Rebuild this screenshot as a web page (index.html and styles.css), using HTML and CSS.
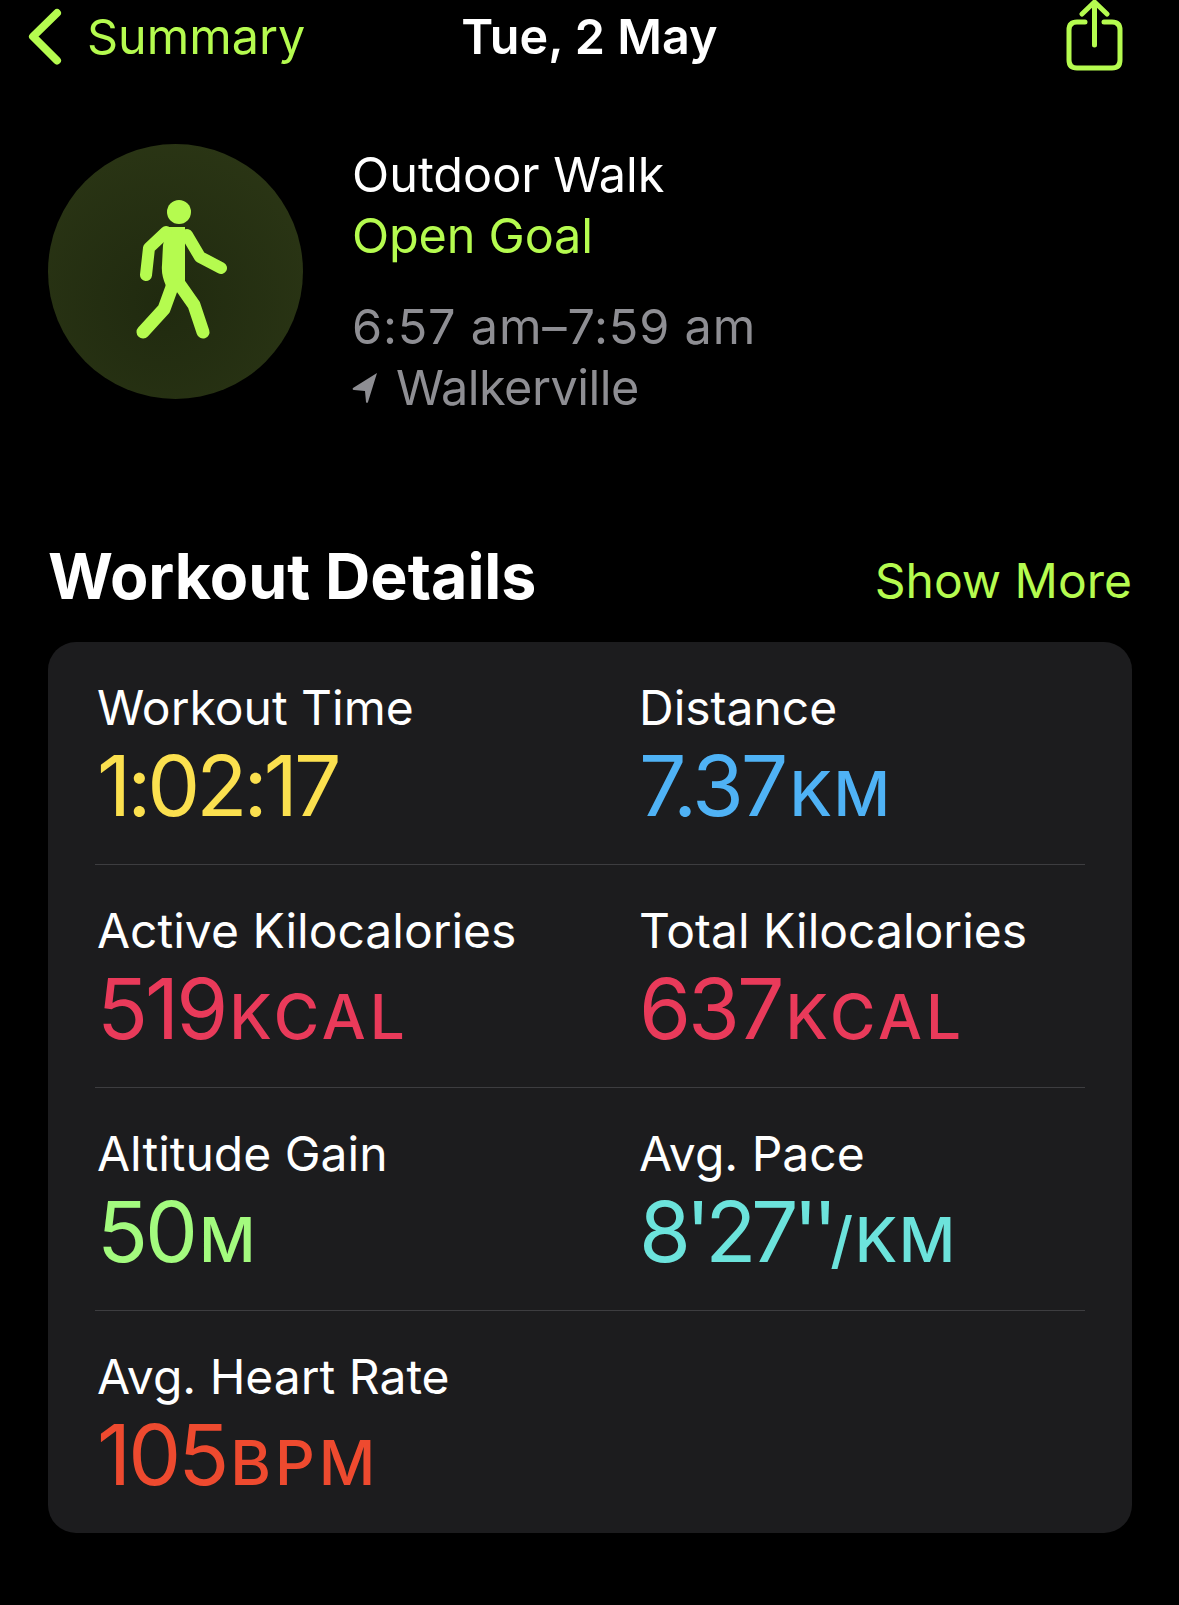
FILE: index.html
```html
<!DOCTYPE html>
<html lang="en">
<head>
    <meta charset="UTF-8">
    <meta name="viewport" content="width=device-width, initial-scale=1.0">
    <title>Workout - Tue, 2 May</title>
    <link rel="stylesheet" href="styles.css">
</head>
<body>
    <div class="nav-bar">
        <div class="nav-back">
            <svg class="chevron" width="34" height="58" viewBox="0 0 34 58">
                <path d="M29 6 L5 29.5 L29 53.5"/>
            </svg>
            <span>Summary</span>
        </div>
        <div class="nav-title">Tue, 2 May</div>
        <div class="nav-share">
            <svg width="57" height="72" viewBox="0 0 57 72">
                <path d="M19 22 H11 Q3 22 3 30 V60 Q3 68 11 68 H46 Q54 68 54 60 V30 Q54 22 46 22 H38"/>
                <path d="M28.5 45 V3 M16 14 L28.5 2 L41 14"/>
            </svg>
        </div>
    </div>

    <div class="workout-head">
        <div class="workout-icon">
            <svg width="255" height="255" viewBox="48 144 255 255">
                <circle class="walker-head" cx="179" cy="212" r="12"/>
                <path class="walker-body" d="M167 227 H185 L185 284 L166 286 Q161 275 162 265 L163 245 Z"/>
                <path class="walker-limb" d="M166 232 L149 248 L146 275"/>
                <path class="walker-limb" d="M187 235 L200 257 L221 268"/>
                <path class="walker-limb thick" d="M172 287 L164 309 L143 332"/>
                <path class="walker-limb thick" d="M180 285 L194 305 L203 332"/>
            </svg>
        </div>
        <div class="workout-info">
            <div class="workout-name">Outdoor Walk</div>
            <div class="workout-goal">Open Goal</div>
            <div class="workout-time">6:57 am–7:59 am</div>
            <div class="workout-place">
                <svg width="26" height="30" viewBox="0 0 26 30">
                    <path d="M25 0 L1 15 Q0 17 2 17 L13 18 L14 29 Q15 31 16 29 Z"/>
                </svg>
                <span>Walkerville</span>
            </div>
        </div>
    </div>

    <div class="section-head">
        <h2>Workout Details</h2>
        <span class="show-more">Show More</span>
    </div>

    <div class="details-card">
        <div class="details-row">
            <div class="stat">
                <div class="stat-label">Workout Time</div>
                <div class="stat-value yellow clock">1:02:17</div>
            </div>
            <div class="stat">
                <div class="stat-label">Distance</div>
                <div class="stat-value blue">7.37<small>KM</small></div>
            </div>
        </div>
        <div class="details-row">
            <div class="stat">
                <div class="stat-label">Active Kilocalories</div>
                <div class="stat-value pink">519<small class="spaced">KCAL</small></div>
            </div>
            <div class="stat">
                <div class="stat-label">Total Kilocalories</div>
                <div class="stat-value pink">637<small class="spaced">KCAL</small></div>
            </div>
        </div>
        <div class="details-row">
            <div class="stat">
                <div class="stat-label">Altitude Gain</div>
                <div class="stat-value green">50<small>M</small></div>
            </div>
            <div class="stat">
                <div class="stat-label">Avg. Pace</div>
                <div class="stat-value teal pace">8'27''<small>/KM</small></div>
            </div>
        </div>
        <div class="details-row">
            <div class="stat">
                <div class="stat-label">Avg. Heart Rate</div>
                <div class="stat-value red">105<small class="spaced">BPM</small></div>
            </div>
        </div>
    </div>
</body>
</html>
```

FILE: styles.css
```css
body {
    font-family: Inter, "Liberation Sans", sans-serif;
    margin: 0;
    background-color: #000;
    color: #fff;
    height: 1605px;
    overflow: hidden;
}

.nav-bar {
    display: grid;
    grid-template-columns: 1fr auto 1fr;
    align-items: center;
    height: 70px;
    padding: 0 56px;
}

.nav-back {
    display: flex;
    align-items: center;
    gap: 25px;
    margin-left: -28px;
    font-size: 48.5px;
    color: #b5fb4f;
}

.chevron path {
    fill: none;
    stroke: #b5fb4f;
    stroke-width: 8;
    stroke-linecap: round;
    stroke-linejoin: round;
}

.nav-title {
    font-size: 48.5px;
    font-weight: 600;
}

.nav-share {
    display: flex;
    justify-content: flex-end;
}

.nav-share path {
    fill: none;
    stroke: #b5fb4f;
    stroke-width: 5;
    stroke-linecap: round;
    stroke-linejoin: round;
}

.workout-head {
    display: flex;
    gap: 49px;
    padding: 74px 48px 0;
}

.workout-icon {
    width: 255px;
    height: 255px;
    border-radius: 50%;
    background: radial-gradient(circle at 45% 62%, #202a0f, #2d3816);
}

.walker-head, .walker-body {
    fill: #b5fb4f;
}

.walker-limb {
    fill: none;
    stroke: #b5fb4f;
    stroke-width: 12;
    stroke-linecap: round;
    stroke-linejoin: round;
}

.walker-limb.thick {
    stroke-width: 13;
}

.workout-info {
    font-size: 48.6px;
    line-height: 61px;
}

.workout-goal {
    color: #b5fb4f;
    letter-spacing: -0.2px;
}

.workout-time {
    color: #8e8e93;
    margin-top: 30px;
    letter-spacing: 0.8px;
}

.workout-place {
    display: flex;
    align-items: center;
    gap: 18px;
    color: #8e8e93;
    letter-spacing: -0.5px;
}

.workout-place path {
    fill: #8e8e93;
}

.section-head {
    display: flex;
    justify-content: space-between;
    align-items: flex-end;
    margin-top: 120px;
    padding: 0 47px 0 48px;
}

.section-head h2 {
    margin: 0;
    font-size: 62.7px;
    line-height: 76px;
    font-weight: 700;
}

.show-more {
    font-size: 48px;
    line-height: 66px;
    color: #b5fb4f;
}

.details-card {
    margin: 28px 47px 0 48px;
    padding: 0 47px;
    background-color: #1c1c1e;
    border-radius: 28px;
}

.details-row {
    display: grid;
    grid-template-columns: 542px 1fr;
    height: 223px;
    box-sizing: border-box;
    padding-top: 34px;
    padding-left: 2px;
    border-bottom: 1px solid #3d3d40;
}

.details-row:last-child {
    height: 222px;
    border-bottom: none;
}

.stat-label {
    font-size: 48px;
    line-height: 64px;
}

.stat-value {
    font-size: 84px;
    line-height: 92px;
    letter-spacing: -3px;
}

.stat-value.clock {
    letter-spacing: -4px;
}

.stat-value.pace {
    letter-spacing: -5.5px;
}

.stat-value small {
    margin-left: 4px;
    font-size: 62px;
    font-weight: 500;
    letter-spacing: 1.5px;
}

.stat-value small.spaced {
    letter-spacing: 4px;
}

.stat-value.pace small {
    margin-left: -2px;
}

.yellow { color: #fbe04f; }
.blue { color: #4fb2f5; }
.pink { color: #e93a5a; }
.green { color: #a3fb7e; }
.teal { color: #6ce3dc; }
.red { color: #ee4a2f; }
```
